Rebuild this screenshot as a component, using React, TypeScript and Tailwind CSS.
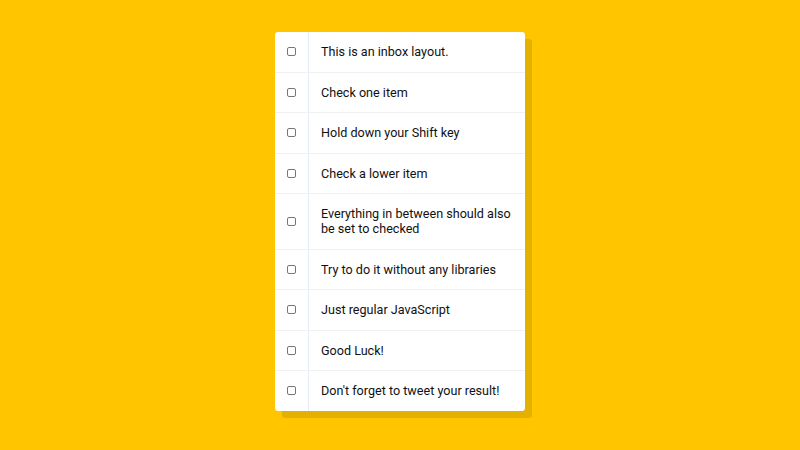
const items = [
  'This is an inbox layout.',
  'Check one item',
  'Hold down your Shift key',
  'Check a lower item',
  'Everything in between should also be set to checked',
  'Try to do it without any libraries',
  'Just regular JavaScript',
  'Good Luck!',
  "Don't forget to tweet your result!",
];

export default function App() {
  return (
    <div className="w-[800px] h-[450px] bg-[#ffc600] flex justify-center pt-[32px] font-['Roboto',sans-serif]">
      <div className="w-[250px] h-fit bg-white rounded-[3px] shadow-[7px_7px_0_rgba(0,0,0,0.1)] overflow-hidden">
        {items.map((text, i) => (
          <div
            key={i}
            className={`flex items-center ${i < items.length - 1 ? 'border-b border-[#f1f1f1]' : ''}`}
          >
            <div className="w-[33px] shrink-0 flex justify-center">
              <span className="block w-[9px] h-[9px] border border-[#767676] rounded-[2px] bg-white" />
            </div>
            <p className="flex-1 self-stretch border-l border-[#e4ecf7] pl-[12px] pr-[8px] py-[12.25px] text-[12.6px] leading-[15px] text-[#111]">
              {text}
            </p>
          </div>
        ))}
      </div>
    </div>
  );
}
